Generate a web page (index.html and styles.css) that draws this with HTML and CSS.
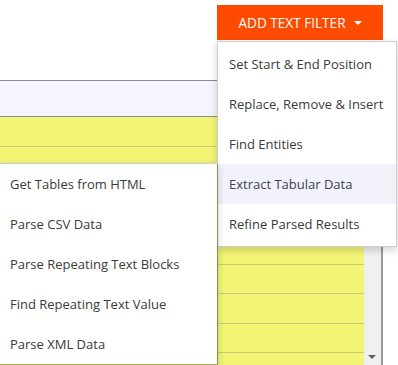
FILE: index.html
```html
<!DOCTYPE html>
<html lang="en">
<head>
  <meta charset="UTF-8">
  <title>Text Filters</title>
  <link rel="stylesheet" href="styles.css">
</head>
<body>
<div class="page">
  <div class="toolbar">
    <button class="btn-filter">ADD TEXT FILTER <span class="caret"></span></button>
  </div>

  <div class="grid-wrap">
    <div class="grid">
      <div class="grid-head"></div>
      <div class="grid-row"></div>
      <div class="grid-row"></div>
      <div class="grid-row"></div>
      <div class="grid-row"></div>
      <div class="grid-row"></div>
      <div class="grid-row"></div>
      <div class="grid-row"></div>
      <div class="grid-row"></div>
      <div class="grid-row"></div>
    </div>
    <div class="scrollbar">
      <span class="arrow-down"></span>
    </div>
  </div>

  <!-- main menu -->
  <ul class="menu menu-main">
    <li>Set Start &amp; End Position</li>
    <li>Replace, Remove &amp; Insert</li>
    <li>Find Entities</li>
    <li class="hover">Extract Tabular Data</li>
    <li>Refine Parsed Results</li>
  </ul>

  <!-- submenu for Extract Tabular Data -->
  <ul class="menu menu-sub">
    <li>Get Tables from HTML</li>
    <li>Parse CSV Data</li>
    <li>Parse Repeating Text Blocks</li>
    <li>Find Repeating Text Value</li>
    <li>Parse XML Data</li>
  </ul>
</div>
</body>
</html>
```

FILE: styles.css
```css
body {
  margin: 0;
  font-family: 'Open Sans', 'Noto Sans', sans-serif;
  background: #fff;
  color: #333;
}
.page {
  position: relative;
  width: 398px;
  height: 365px;
  overflow: hidden;
}
.toolbar {
  height: 80px;
  padding: 5px 0 0 217px;
  box-sizing: border-box;
}
.btn-filter {
  width: 166px;
  height: 35px;
  background: #ff4b00;
  color: #fff;
  border: none;
  font-family: inherit;
  font-size: 13.6px;
  cursor: pointer;
  display: flex;
  align-items: center;
  justify-content: center;
  gap: 8px;
  padding: 0;
}
.caret {
  width: 0;
  height: 0;
  border-left: 4px solid transparent;
  border-right: 4px solid transparent;
  border-top: 4px solid #fff;
}
.grid-wrap {
  display: flex;
  width: 383px;
  height: 285px;
  border-top: 1px solid #8a8a8a;
  border-right: 2px solid #9a9a9a;
  box-sizing: border-box;
}
.grid {
  flex: 1;
  display: flex;
  flex-direction: column;
  background: #f3f575;
}
.grid-head {
  height: 35px;
  flex: none;
  background: #f5f5fd;
  border-bottom: 1px solid #8a8a8a;
}
.grid-row {
  height: 28.5px;
  flex: none;
  border-bottom: 1px solid #cdc77c;
}
.grid-row:first-of-type {
  height: 27px;
}
.scrollbar {
  width: 17px;
  background: #f0f0f0;
  position: relative;
}
.arrow-down {
  position: absolute;
  left: 4px;
  bottom: 6px;
  border-left: 4px solid transparent;
  border-right: 4px solid transparent;
  border-top: 4px solid #606060;
}
.menu {
  list-style: none;
  margin: 0;
  padding: 2px 0;
  position: absolute;
  background: #fff;
  font-size: 13px;
  color: #3a3a3a;
  box-sizing: border-box;
}
.menu li {
  height: 40px;
  line-height: 40px;
  padding: 0 11px;
  white-space: nowrap;
}
.menu li.hover {
  background: #f2f2fa;
  color: #3b4252;
}
.menu-main {
  left: 217px;
  top: 41px;
  width: 180px;
  border: 1px solid #cfcfcf;
  box-shadow: 0 3px 8px rgba(0, 0, 0, 0.18);
}
.menu-sub {
  left: -1px;
  top: 163px;
  width: 219px;
  padding: 0;
  border: 1px solid #cfcfcf;
  border-right-color: #8f8d4a;
  border-bottom-color: #b1ae4c;
  box-shadow: 0 3px 8px rgba(0, 0, 0, 0.18);
}
.menu-sub li {
  padding-left: 10px;
}
```
